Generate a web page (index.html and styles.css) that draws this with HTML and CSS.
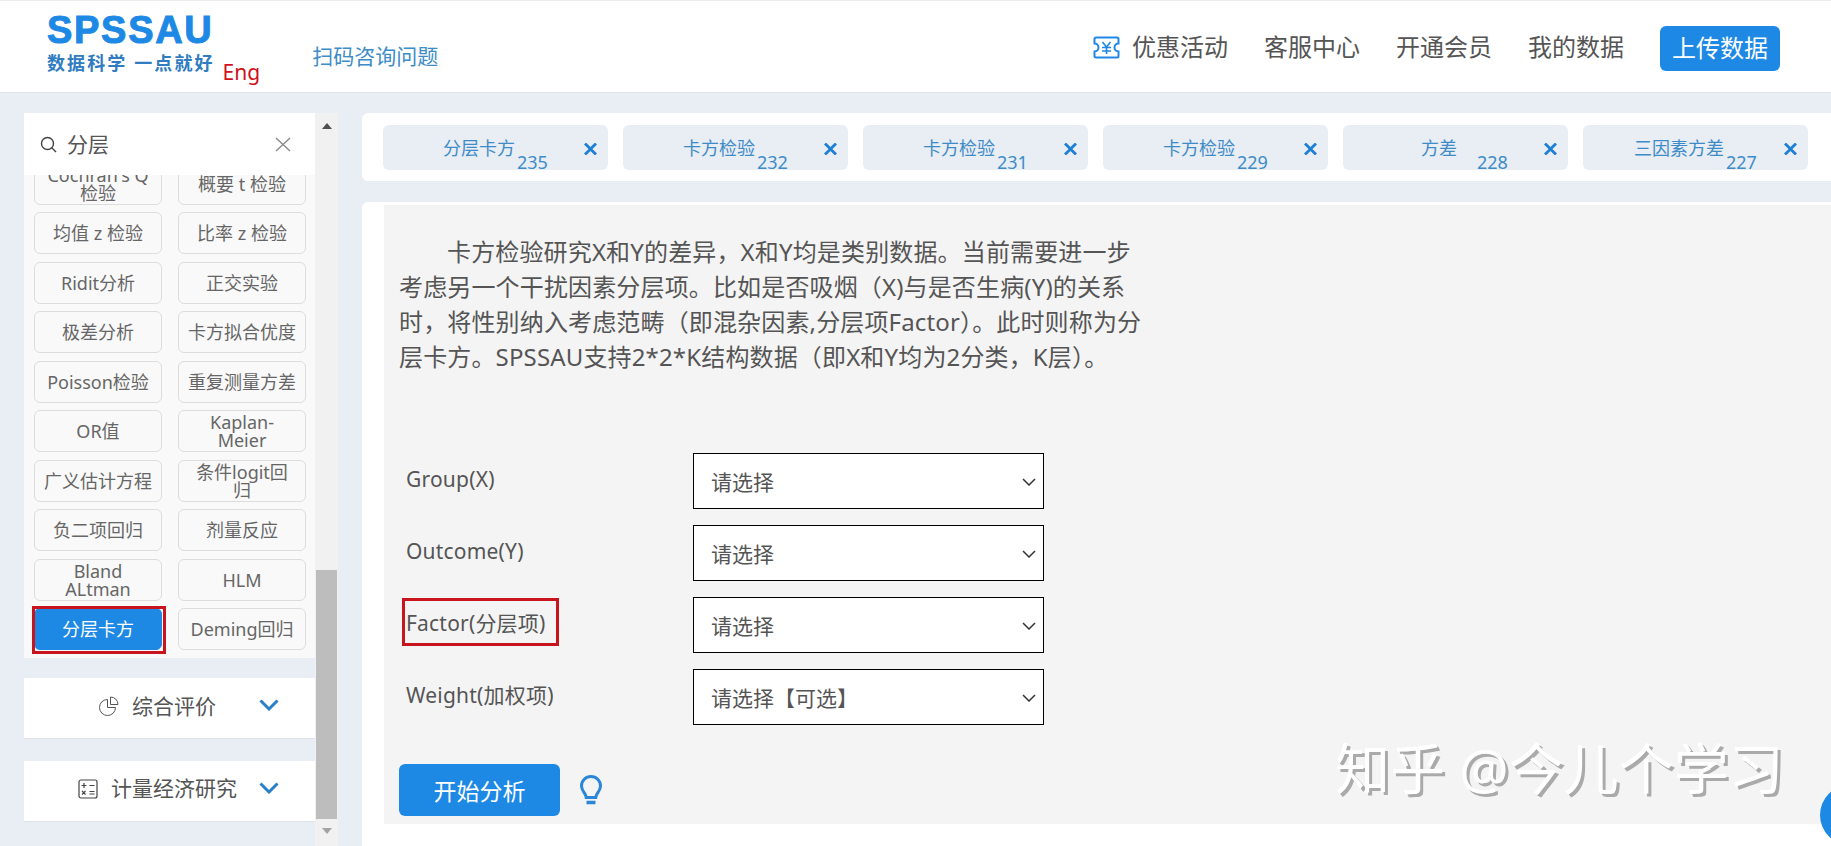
FILE: index.html
```html
<!DOCTYPE html>
<html lang="zh-CN">
<head>
<meta charset="utf-8">
<title>SPSSAU 分层卡方</title>
<link rel="stylesheet" href="styles.css">
</head>
<body>
<header class="topbar">
  <div class="brand">
    <div class="logo">
      <div class="logo-name">SPSSAU</div>
      <div class="logo-tag">数据科学 一点就好</div>
    </div>
    <a class="lang">Eng</a>
    <a class="consult">扫码咨询问题</a>
  </div>
  <nav class="nav">
    <a class="nav-item nav-promo">
      <svg class="promo-icon" viewBox="0 0 27 23" fill="none" stroke="#1e88e5" stroke-width="2"><path d="M3 1.500h21a1.500 1.500 0 0 1 1.500 1.500v4.500a4 4 0 0 0 0 8V20a1.500 1.500 0 0 1-1.500 1.500H3A1.500 1.500 0 0 1 1.500 20v-4.500a4 4 0 0 0 0-8V3A1.500 1.500 0 0 1 3 1.500z"/><path stroke-width="1.600" d="M9.500 6l4 5 4-5M9 11.500h9M9 15h9M13.500 11v7"/></svg>
      优惠活动
    </a>
    <a class="nav-item">客服中心</a>
    <a class="nav-item">开通会员</a>
    <a class="nav-item">我的数据</a>
    <a class="upload">上传数据</a>
  </nav>
</header>

<main class="layout">
  <aside class="side">
    <div class="side-col">
      <div class="search">
        <svg class="search-icon" viewBox="0 0 17 17" fill="none" stroke="#444" stroke-width="1.400"><circle cx="7.500" cy="7.500" r="6"/><path d="M11.800 11.800L16 16"/></svg>
        <span class="search-text">分层</span>
        <svg class="search-clear" viewBox="0 0 16 15" fill="none" stroke="#8c8c8c" stroke-width="1.500"><path d="M1 1l14 13M15 1L1 14"/></svg>
      </div>
      <div class="list-panel">
        <div class="method-grid">
          <a class="method">Cochran's Q 检验</a><a class="method">概要 t 检验</a>
          <a class="method">均值 z 检验</a><a class="method">比率 z 检验</a>
          <a class="method">Ridit分析</a><a class="method">正交实验</a>
          <a class="method">极差分析</a><a class="method">卡方拟合优度</a>
          <a class="method">Poisson检验</a><a class="method">重复测量方差</a>
          <a class="method">OR值</a><a class="method">Kaplan-Meier</a>
          <a class="method">广义估计方程</a><a class="method">条件logit回<br>归</a>
          <a class="method">负二项回归</a><a class="method">剂量反应</a>
          <a class="method">Bland ALtman</a><a class="method">HLM</a>
          <a class="method method-active">分层卡方<span class="mark mark-method"></span></a><a class="method">Deming回归</a>
        </div>
      </div>
      <div class="acc acc-first">
        <svg class="acc-icon" viewBox="0 0 20 20" fill="none" stroke="#555" stroke-width="1"><path d="M8.500 3.500a8 8 0 1 0 8 8h-8z"/><path d="M11.500 1a7.500 7.500 0 0 1 7.500 7.500h-7.500z"/></svg>
        <span class="acc-label">综合评价</span>
        <svg class="chev" viewBox="0 0 20 12" fill="none" stroke="#2a80c8" stroke-width="3"><path d="M1.500 1.500L10 10l8.500-8.500"/></svg>
      </div>
      <div class="acc acc-second">
        <svg class="acc-icon" viewBox="0 0 20 20" fill="none" stroke="#444" stroke-width="1.200"><rect x="1" y="1" width="18" height="18" rx="2"/><path d="M3.500 6.500h5M6 4v5M11.500 6.500h5M4 12l3.500 3.500M7.500 12L4 15.500M11.500 12.500h5M11.500 15h5"/></svg>
        <span class="acc-label">计量经济研究</span>
        <svg class="chev" viewBox="0 0 20 12" fill="none" stroke="#2a80c8" stroke-width="3"><path d="M1.500 1.500L10 10l8.500-8.500"/></svg>
      </div>
    </div>
    <div class="scrollbar">
      <span class="arrow-up"></span>
      <span class="thumb"></span>
      <span class="arrow-down"></span>
    </div>
  </aside>

  <section class="content">
    <div class="tabs">
      <div class="tab"><div class="tab-main"><span class="tab-label">分层卡方<i class="tab-num">235</i></span></div><svg class="tab-x" viewBox="0 0 13 12" fill="none" stroke="#1e7fd6" stroke-width="2.800"><path d="M1 .5l11 11M12 .5l-11 11"/></svg></div>
      <div class="tab"><div class="tab-main"><span class="tab-label">卡方检验<i class="tab-num">232</i></span></div><svg class="tab-x" viewBox="0 0 13 12" fill="none" stroke="#1e7fd6" stroke-width="2.800"><path d="M1 .5l11 11M12 .5l-11 11"/></svg></div>
      <div class="tab"><div class="tab-main"><span class="tab-label">卡方检验<i class="tab-num">231</i></span></div><svg class="tab-x" viewBox="0 0 13 12" fill="none" stroke="#1e7fd6" stroke-width="2.800"><path d="M1 .5l11 11M12 .5l-11 11"/></svg></div>
      <div class="tab"><div class="tab-main"><span class="tab-label">卡方检验<i class="tab-num">229</i></span></div><svg class="tab-x" viewBox="0 0 13 12" fill="none" stroke="#1e7fd6" stroke-width="2.800"><path d="M1 .5l11 11M12 .5l-11 11"/></svg></div>
      <div class="tab"><div class="tab-main"><span class="tab-label">方差<i class="tab-num">228</i></span></div><svg class="tab-x" viewBox="0 0 13 12" fill="none" stroke="#1e7fd6" stroke-width="2.800"><path d="M1 .5l11 11M12 .5l-11 11"/></svg></div>
      <div class="tab"><div class="tab-main"><span class="tab-label">三因素方差<i class="tab-num">227</i></span></div><svg class="tab-x" viewBox="0 0 13 12" fill="none" stroke="#1e7fd6" stroke-width="2.800"><path d="M1 .5l11 11M12 .5l-11 11"/></svg></div>
    </div>
    <div class="card">
      <div class="card-inner">
        <p class="intro">卡方检验研究X和Y的差异，X和Y均是类别数据。当前需要进一步<br>考虑另一个干扰因素分层项。比如是否吸烟（X)与是否生病(Y)的关系<br>时，将性别纳入考虑范畴（即混杂因素,分层项Factor）。此时则称为分<br>层卡方。SPSSAU支持2*2*K结构数据（即X和Y均为2分类，K层）。</p>
        <form class="form">
          <div class="row">
            <label class="row-label">Group(X)</label>
            <div class="select">请选择<svg class="select-chev" viewBox="0 0 14 8" fill="none" stroke="#333" stroke-width="1.500"><path d="M1 1l6 6 6-6"/></svg></div>
          </div>
          <div class="row">
            <label class="row-label">Outcome(Y)</label>
            <div class="select">请选择<svg class="select-chev" viewBox="0 0 14 8" fill="none" stroke="#333" stroke-width="1.500"><path d="M1 1l6 6 6-6"/></svg></div>
          </div>
          <div class="row">
            <label class="row-label">Factor(分层项)<span class="mark mark-label"></span></label>
            <div class="select">请选择<svg class="select-chev" viewBox="0 0 14 8" fill="none" stroke="#333" stroke-width="1.500"><path d="M1 1l6 6 6-6"/></svg></div>
          </div>
          <div class="row">
            <label class="row-label">Weight(加权项)</label>
            <div class="select">请选择【可选】<svg class="select-chev" viewBox="0 0 14 8" fill="none" stroke="#333" stroke-width="1.500"><path d="M1 1l6 6 6-6"/></svg></div>
          </div>
        </form>
        <div class="actions">
          <button class="start" type="button">开始分析</button>
          <svg class="bulb" viewBox="0 0 22 30" fill="none" stroke="#2a86d8" stroke-width="3"><path d="M11 1.500a9.500 9.500 0 0 0-9.500 9.500c0 3.500 2 5.500 3.500 8 .7 1.200 1 2.300 1.200 3.500h9.600c.2-1.200.5-2.300 1.200-3.500 1.500-2.500 3.500-4.500 3.500-8A9.500 9.500 0 0 0 11 1.500z"/><path stroke-width="3.500" d="M6.500 27.500h9"/></svg>
        </div>
        <div class="watermark">知乎 @今儿个学习</div>
      </div>
    </div>
  </section>
</main>
<span class="chat-bubble"></span>
</body>
</html>
```
FILE: styles.css
```css
* { box-sizing: border-box; }
html, body { margin: 0; padding: 0; height: 846px; overflow: hidden; }
body {
  position: relative;
  background: #e9edf4;
  color: #555;
  font-family: "Noto Sans", "Noto Sans CJK SC", sans-serif;
}
a { color: inherit; text-decoration: none; }

/* top bar */
.topbar {
  height: 93px;
  background: #fff;
  border-top: 1px solid #ececec;
  border-bottom: 1px solid #e0e3ea;
  display: flex;
  justify-content: space-between;
  padding: 0 51px 0 47px;
}
.brand { display: flex; align-items: flex-start; }
.logo { padding-top: 10px; }
.logo-name {
  font-family: "Liberation Sans", sans-serif;
  font-weight: 700;
  font-size: 38px;
  line-height: 38px;
  letter-spacing: 1.700px;
  color: #1e88e5;
  -webkit-text-stroke: 1px #1e88e5;
}
.logo-tag {
  margin-top: 2px;
  font-size: 18px;
  line-height: 24px;
  font-weight: 700;
  letter-spacing: 2.100px;
  color: #2f7cc0;
  white-space: nowrap;
}
.lang {
  margin: 57px 0 0 8px;
  font-size: 21px;
  line-height: 28px;
  color: #d01020;
}
.consult {
  margin: 40px 0 0 52px;
  font-size: 21px;
  line-height: 30px;
  color: #3d8cc8;
  white-space: nowrap;
}
.nav { display: flex; align-items: center; gap: 36px; padding-top: 3px; }
.nav-item {
  display: flex;
  align-items: center;
  gap: 12px;
  margin-top: -2px;
  font-size: 24px;
  line-height: 32px;
  color: #555;
}
.promo-icon { width: 27px; height: 23px; }
.upload {
  width: 120px;
  height: 45px;
  background: #1e88e5;
  border-radius: 6px;
  color: #fff;
  font-size: 24px;
  line-height: 43px;
  text-align: center;
}

/* page layout */
.layout { display: flex; height: 753px; padding-top: 20px; }

/* side column */
.side { width: 362px; flex: none; display: flex; padding-left: 24px; height: 733px; }
.side-col { width: 291px; display: flex; flex-direction: column; }
.search {
  height: 62px;
  flex: none;
  background: #fff;
  display: flex;
  align-items: center;
  padding: 0 24px 0 16px;
  position: relative;
  z-index: 1;
}
.search-icon { width: 17px; height: 17px; flex: none; }
.search-text { margin-left: 10px; font-size: 21px; line-height: 30px; color: #555; flex: 1; }
.search-clear { width: 16px; height: 15px; flex: none; }
.list-panel { height: 483px; flex: none; background: #f9f9f9; overflow: hidden; }
.method-grid {
  margin-top: -12.500px;
  padding-left: 10px;
  display: grid;
  grid-template-columns: 128px 128px;
  grid-auto-rows: 42px;
  column-gap: 16px;
  row-gap: 7.500px;
}
.method {
  position: relative;
  border: 1px solid #ddd;
  border-radius: 6px;
  background: #f9f9f9;
  display: flex;
  align-items: center;
  justify-content: center;
  text-align: center;
  font-size: 18px;
  line-height: 18px;
  color: #666;
  padding: 0 8px;
}
.method-active { background: #1e88e5; border-color: #1e88e5; color: #fff; }
.acc {
  flex: none;
  height: 61px;
  background: #fff;
  border-bottom: 1px solid #dfe2e8;
  display: flex;
  align-items: center;
  position: relative;
}
.acc-first { margin-top: 20px; padding-left: 75px; }
.acc-second { margin-top: 22px; padding-left: 54px; }
.acc-icon { width: 20px; height: 20px; flex: none; margin-bottom: 4px; }
.acc-label { margin: 0 0 4px 13px; font-size: 21px; line-height: 30px; color: #555; white-space: nowrap; }
.acc-second .acc-label { margin-bottom: 6px; }
.chev { position: absolute; left: 235px; top: 21px; width: 20px; height: 12px; }
.scrollbar {
  width: 23px;
  background: #f1f1f1;
  display: flex;
  flex-direction: column;
  align-items: center;
  position: relative;
}
.arrow-up, .arrow-down {
  position: absolute;
  width: 0;
  height: 0;
  border-left: 5.500px solid transparent;
  border-right: 5.500px solid transparent;
}
.arrow-up { top: 10px; border-bottom: 6px solid #505050; }
.arrow-down { top: 715px; border-top: 6px solid #a3a3a3; }
.thumb { position: absolute; top: 457px; right: 1px; width: 21px; height: 249px; background: #bdbdbd; }

/* content */
.content { flex: 1; min-width: 0; display: flex; flex-direction: column; }
.tabs {
  height: 68px;
  flex: none;
  background: #fff;
  border-radius: 6px 0 0 6px;
  display: flex;
  gap: 15px;
  padding: 12px 0 0 21px;
}
.tab {
  width: 225px;
  height: 45px;
  flex: none;
  background: #e9edf4;
  border-radius: 6px;
  display: flex;
  align-items: flex-start;
}
.tab-main { width: 192px; display: flex; justify-content: center; padding-top: 11px; }
.tab-label {
  position: relative;
  min-width: 72px;
  text-align: center;
  font-size: 18px;
  line-height: 24px;
  color: #3d8cc8;
}
.tab-num {
  position: absolute;
  left: 100%;
  top: 14px;
  margin-left: 2px;
  font-style: normal;
  font-size: 18px;
  line-height: 24px;
}
.tab-x { width: 13px; height: 12px; margin: 18px 0 0 9px; flex: none; }
.card {
  flex: 1;
  margin-top: 21px;
  background: #fff;
  border-radius: 6px 0 0 0;
  padding: 3px 0 22px 22px;
}
.card-inner { height: 100%; background: #f4f4f4; padding: 29px 0 0 15px; position: relative; }
.intro {
  margin: 0;
  font-size: 24px;
  line-height: 35px;
  text-indent: 48px;
  letter-spacing: .15px;
  color: #555;
  white-space: nowrap;
}
.form { margin-top: 79px; display: flex; flex-direction: column; gap: 16px; }
.row { display: flex; align-items: center; }
.row-label {
  position: relative;
  width: 294px;
  padding: 0 0 4px 7px;
  font-size: 21px;
  line-height: 30px;
  letter-spacing: .2px;
  color: #555;
  white-space: nowrap;
}
.select {
  position: relative;
  width: 351px;
  height: 56px;
  background: #fff;
  border: 1px solid #000;
  padding: 1px 0 0 17px;
  font-size: 21px;
  line-height: 54px;
  color: #555;
}
.select-chev { position: absolute; right: 7px; top: 24px; width: 14px; height: 8px; }
.actions { margin-top: 39px; display: flex; align-items: center; gap: 20px; }
.start {
  width: 161px;
  height: 52px;
  border: 0;
  border-radius: 6px;
  background: #1e88e5;
  color: #fff;
  font-family: inherit;
  font-size: 23px;
}
.bulb { width: 22px; height: 30px; }
.watermark {
  position: absolute;
  left: 951px;
  top: 528px;
  font-size: 55px;
  line-height: 70px;
  color: #fff;
  text-shadow: 3px 3px 0 #aaa;
  white-space: nowrap;
}

/* red annotation frames */
.mark { position: absolute; border: 3px solid #c8141c; pointer-events: none; }
.mark-method { left: -3px; top: -3px; width: 134px; height: 48px; }
.mark-label { left: 3px; top: -10px; width: 157px; height: 48px; }

.chat-bubble {
  position: absolute;
  left: 1820px;
  top: 785px;
  width: 60px;
  height: 60px;
  border-radius: 50%;
  background: #1e88e5;
}
```
